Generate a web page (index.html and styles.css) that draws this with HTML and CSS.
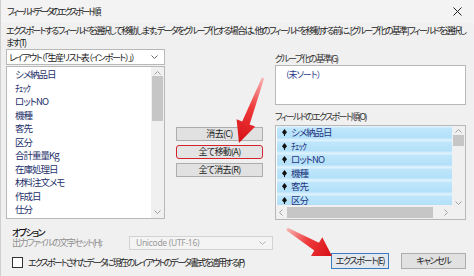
FILE: index.html
```html
<!DOCTYPE html>
<html lang="ja">
<head>
<meta charset="utf-8">
<link rel="stylesheet" href="styles.css">
</head>
<body>
<div class="win">
  <div class="titlebar">
    <span class="title">フィールドデータのエクスポート順</span>
    <svg class="close" width="9" height="9" viewBox="0 0 9 9"><path d="M0.5 0.5L8.5 8.5M8.5 0.5L0.5 8.5" stroke="#222" stroke-width="1"/></svg>
  </div>
  <div class="desc"><span class="line1">エクスポートするフィールドを選択して移動します。データをグループ化する場合は、他のフィールドを移動する前に、[グループ化の基準] フィールドを選択し</span><br><span>ます(T)</span></div>
  <div class="main">
    <div class="left">
      <div class="select">
        <span class="seltext">レイアウト（「生産リスト表（インポート）」）</span>
        <svg class="chev" width="7" height="4" viewBox="0 0 7 4"><path d="M0.5 0.5L3.5 3.5L6.5 0.5" fill="none" stroke="#666" stroke-width="1"/></svg>
      </div>
      <div class="list">
        <ul class="items">
          <li>シメ納品日</li>
          <li>ﾁｪｯｸ</li>
          <li>ロットNO</li>
          <li>機種</li>
          <li>客先</li>
          <li>区分</li>
          <li>合計重量Kg</li>
          <li>在庫処理日</li>
          <li>材料注文メモ</li>
          <li>作成日</li>
          <li>仕分</li>
          <li>出荷状況</li>
        </ul>
        <div class="vscroll">
          <svg class="sarrow" width="7" height="4" viewBox="0 0 7 4"><path d="M0.5 3.5L3.5 0.5L6.5 3.5" fill="none" stroke="#a0a0a0" stroke-width="1"/></svg>
          <div class="thumb thumb-left"></div>
          <div class="track"></div>
          <svg class="sarrow" width="7" height="4" viewBox="0 0 7 4"><path d="M0.5 0.5L3.5 3.5L6.5 0.5" fill="none" stroke="#a0a0a0" stroke-width="1"/></svg>
        </div>
      </div>
    </div>
    <div class="mid">
      <button class="btn">消去(C)</button>
      <button class="btn btn-red">全て移動(A)</button>
      <button class="btn">全て消去(R)</button>
    </div>
    <div class="right">
      <div class="label">グループ化の基準(G)</div>
      <div class="groupbox">（未ソート）</div>
      <div class="label label2">フィールドのエクスポート順(O)</div>
      <div class="exportbox">
        <div class="rowsarea">
          <ul class="rows">
            <li><svg class="grip" width="5" height="7" viewBox="0 0 5 7"><path d="M2.5 0L5 3.2L2.5 6.2L0 3.2Z M2 5.5H3V7H2Z" fill="#111"/></svg>シメ納品日</li>
            <li><svg class="grip" width="5" height="7" viewBox="0 0 5 7"><path d="M2.5 0L5 3.2L2.5 6.2L0 3.2Z M2 5.5H3V7H2Z" fill="#111"/></svg>ﾁｪｯｸ</li>
            <li><svg class="grip" width="5" height="7" viewBox="0 0 5 7"><path d="M2.5 0L5 3.2L2.5 6.2L0 3.2Z M2 5.5H3V7H2Z" fill="#111"/></svg>ロットNO</li>
            <li><svg class="grip" width="5" height="7" viewBox="0 0 5 7"><path d="M2.5 0L5 3.2L2.5 6.2L0 3.2Z M2 5.5H3V7H2Z" fill="#111"/></svg>機種</li>
            <li><svg class="grip" width="5" height="7" viewBox="0 0 5 7"><path d="M2.5 0L5 3.2L2.5 6.2L0 3.2Z M2 5.5H3V7H2Z" fill="#111"/></svg>客先</li>
            <li><svg class="grip" width="5" height="7" viewBox="0 0 5 7"><path d="M2.5 0L5 3.2L2.5 6.2L0 3.2Z M2 5.5H3V7H2Z" fill="#111"/></svg>区分</li>
          </ul>
          <div class="vscroll vscroll2">
            <svg class="sarrow" width="7" height="4" viewBox="0 0 7 4"><path d="M0.5 3.5L3.5 0.5L6.5 3.5" fill="none" stroke="#a0a0a0" stroke-width="1"/></svg>
            <div class="thumb thumb-right"></div>
            <div class="track"></div>
            <svg class="sarrow" width="7" height="4" viewBox="0 0 7 4"><path d="M0.5 0.5L3.5 3.5L6.5 0.5" fill="none" stroke="#a0a0a0" stroke-width="1"/></svg>
          </div>
        </div>
        <div class="hscroll">
          <svg class="harrow" width="4" height="7" viewBox="0 0 4 7"><path d="M3.5 0.5L0.5 3.5L3.5 6.5" fill="none" stroke="#a0a0a0" stroke-width="1"/></svg>
          <div class="hthumb"></div>
          <svg class="harrow" width="4" height="7" viewBox="0 0 4 7"><path d="M0.5 0.5L3.5 3.5L0.5 6.5" fill="none" stroke="#a0a0a0" stroke-width="1"/></svg>
          <div class="corner"></div>
        </div>
      </div>
    </div>
  </div>
  <div class="options">
    <div class="opt-title">オプション</div>
    <div class="charset">
      <span class="charset-label">出力ファイルの文字セット(H):</span>
      <div class="select2">
        <span>Unicode (UTF-16)</span>
        <svg class="chev" width="7" height="4" viewBox="0 0 7 4"><path d="M0.5 0.5L3.5 3.5L6.5 0.5" fill="none" stroke="#b0b0b0" stroke-width="1"/></svg>
      </div>
    </div>
    <div class="bottom">
      <div class="chk"><span class="box"></span><span class="chktext">エクスポートされたデータに現在のレイアウトのデータ書式を適用する(P)</span></div>
      <div class="btns">
        <button class="btn btn-default">エクスポート(E)</button>
        <button class="btn btn-cancel">キャンセル</button>
      </div>
    </div>
  </div>
  <svg class="arrows" width="474" height="276" viewBox="0 0 474 276">
    <defs>
      <linearGradient id="g1" x1="263" y1="78" x2="239" y2="143" gradientUnits="userSpaceOnUse">
        <stop offset="0" stop-color="#f6b4b4"/>
        <stop offset="0.45" stop-color="#ef3b3b"/>
        <stop offset="1" stop-color="#d50f16"/>
      </linearGradient>
      <linearGradient id="g2" x1="287" y1="229" x2="332" y2="256" gradientUnits="userSpaceOnUse">
        <stop offset="0" stop-color="#f6b4b4"/>
        <stop offset="0.45" stop-color="#ef3b3b"/>
        <stop offset="1" stop-color="#d50f16"/>
      </linearGradient>
    </defs>
    <polygon points="264.1,78.4 249.6,124.4 255.2,126.6 239,143 236.6,119.2 242.2,121.4 261.9,77.6" fill="url(#g1)"/>
    <polygon points="286.2,230.3 314.3,250.6 311,256.1 332,256 322.3,237.3 318.9,242.8 287.8,227.7" fill="url(#g2)"/>
  </svg>
</div>
</body>
</html>
```

FILE: styles.css
```css
* { box-sizing: border-box; }
html, body { margin: 0; padding: 0; }
body {
  width: 474px;
  height: 276px;
  overflow: hidden;
  font-family: "Noto Sans CJK JP", "Noto Sans", sans-serif;
  font-feature-settings: "palt";
  font-size: 9px;
  color: #222;
  background: #f0f0f0;
}
.win {
  position: relative;
  width: 474px;
  height: 276px;
  overflow: hidden;
  background: #f0f0f0;
  border-left: 1px solid #cfcfcf;
}
.titlebar {
  height: 23px;
  display: flex;
  align-items: center;
  justify-content: space-between;
  padding: 0 12px 0 6px;
  background: #f3f3f3;
}
.title {
  font-size: 9px;
  letter-spacing: -2.4px;
  color: #222;
}
.desc {
  padding-left: 5px;
  line-height: 12px;
  height: 26px;
  padding-top: 2px;
  white-space: nowrap;
  letter-spacing: -1.7px;
  color: #222;
}
.main {
  display: grid;
  grid-template-columns: 159px 87px 192px;
  column-gap: 11px;
  padding-left: 5px;
  height: 171px;
}
.main .right { margin-left: 1px; }
.select {
  height: 16px;
  background: #fff;
  border: 1px solid #b8b8b8;
  display: flex;
  align-items: center;
  justify-content: space-between;
  padding: 0 6px 0 2px;
  white-space: nowrap;
  letter-spacing: -1.4px;
}
.list {
  margin-top: 1px;
  height: 153px;
  background: #fff;
  border: 1px solid #b8b8b8;
  display: flex;
  overflow: hidden;
}
.items {
  list-style: none;
  margin: 0;
  padding: 1px 0 0 8px;
  flex: 1;
  overflow: hidden;
  color: #24306a;
  font-size: 9.5px;
  letter-spacing: -1px;
}
.items li {
  height: 13.5px;
  line-height: 13.5px;
  white-space: nowrap;
}
.vscroll {
  width: 13px;
  display: flex;
  flex-direction: column;
  align-items: center;
  background: #f0f0f0;
  padding-top: 4px;
  padding-bottom: 4px;
}
.sarrow { flex: none; }
.thumb {
  width: 11px;
  background: #c6c6c6;
  flex: none;
}
.thumb-left { height: 45px; margin-top: 1px; }
.thumb-right { height: 11px; margin-top: 2px; }
.track { flex: 1; }
.mid {
  display: flex;
  flex-direction: column;
  gap: 4px;
  padding-top: 78px;
}
.btn {
  font-family: inherit;
  font-feature-settings: "palt";
  font-size: 9px;
  letter-spacing: -0.7px;
  color: #222;
  height: 14px;
  padding: 0;
  line-height: 12px;
  white-space: nowrap;
  background: #e1e1e1;
  border: 1px solid #adadad;
  border-radius: 0;
}
.btn-red {
  border: 1.5px solid #d3242c;
  border-radius: 3px;
  background: #e4e4e4;
}
.label {
  height: 16px;
  padding-top: 3px;
  line-height: 13px;
  letter-spacing: -1.7px;
  color: #333;
  white-space: nowrap;
}
.label2 {
  height: 20px;
  padding-top: 5px;
}
.groupbox {
  height: 40px;
  background: #fff;
  border: 1px solid #b8b8b8;
  padding: 2px 0 0 9px;
  line-height: 13px;
  color: #2b3b8a;
  letter-spacing: -1px;
}
.exportbox {
  height: 95px;
  background: #fff;
  border: 1px solid #b8b8b8;
  display: flex;
  flex-direction: column;
}
.rowsarea {
  height: 79px;
  display: flex;
  overflow: hidden;
}
.rows {
  list-style: none;
  margin: 0;
  padding: 0 0 0 1px;
  flex: 1;
  color: #23357e;
  font-size: 9.5px;
  letter-spacing: -1px;
  overflow: hidden;
}
.rows li {
  height: 13.5px;
  line-height: 13.5px;
  display: flex;
  align-items: center;
  gap: 4px;
  padding-left: 5px;
  white-space: nowrap;
  background: linear-gradient(#e6f5fe 0, #bfe6fb 18%, #b3e0f9 82%, #dcf1fd 100%);
}
.grip { flex: none; }
.vscroll2 { padding-top: 3px; padding-bottom: 0; }
.hscroll {
  height: 14px;
  display: flex;
  align-items: center;
  background: #f0f0f0;
  padding-left: 3px;
}
.harrow { flex: none; }
.hthumb {
  width: 146px;
  height: 11px;
  background: #c6c6c6;
  margin: 0 11px 0 4px;
}
.corner {
  width: 13px;
  height: 14px;
  margin-left: auto;
  background: #f0f0f0;
}
.options {
  padding-left: 11px;
}
.opt-title {
  padding-top: 8px;
  line-height: 10px;
  height: 16px;
  color: #111;
  letter-spacing: -1.5px;
  font-weight: 500;
}
.charset {
  display: flex;
  align-items: center;
  height: 14px;
  line-height: 10px;
}
.charset-label {
  width: 117px;
  color: #8f8f8f;
  letter-spacing: -1.5px;
  white-space: nowrap;
}
.select2 {
  width: 144px;
  height: 14px;
  border: 1px solid #d2d2d2;
  background: #f4f4f4;
  display: flex;
  align-items: center;
  justify-content: space-between;
  padding: 0 6px 0 6px;
  color: #9a9a9a;
  font-family: "Noto Sans", sans-serif;
  font-size: 8.5px;
  letter-spacing: -0.3px;
}
.bottom {
  display: flex;
  align-items: center;
  height: 20px;
  padding-top: 4px;
}
.chk {
  display: flex;
  align-items: center;
  gap: 5px;
}
.box {
  width: 11px;
  height: 11px;
  border: 1px solid #333;
  background: #fff;
  flex: none;
}
.chktext {
  white-space: nowrap;
  letter-spacing: -1.85px;
  color: #222;
}
.btns {
  margin-left: auto;
  margin-right: 8px;
  margin-top: -2px;
  display: flex;
  gap: 12px;
}
.btn-default {
  width: 58px;
  height: 16px;
  border: 1px solid #3b7cc0;
  background: #e3e8ee;
  letter-spacing: -1.3px;
}
.btn-cancel {
  width: 65px;
  height: 16px;
  letter-spacing: -1.3px;
}
.arrows {
  position: absolute;
  left: -1px;
  top: 0;
  pointer-events: none;
}
```
